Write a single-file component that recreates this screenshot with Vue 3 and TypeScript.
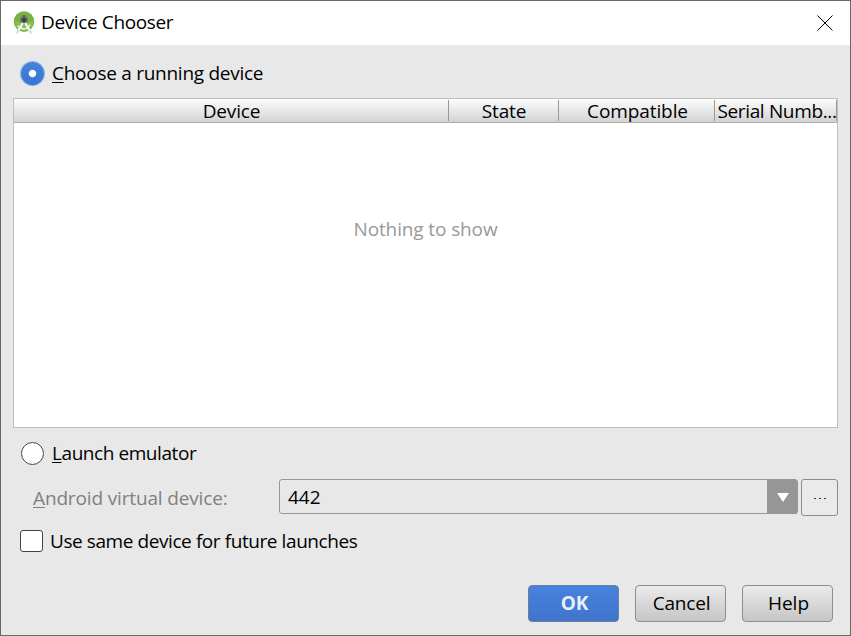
<script setup lang="ts">
import { ref } from 'vue'

interface Column {
  key: string
  label: string
}

const columns: Column[] = [
  { key: 'device', label: 'Device' },
  { key: 'state', label: 'State' },
  { key: 'compatible', label: 'Compatible' },
  { key: 'serial', label: 'Serial Numb...' },
]

const mode = ref<'running' | 'emulator'>('running')
const reuse = ref(false)
const avd = ref('442')
</script>

<template>
  <div class="dialog">
    <header class="titlebar">
      <svg class="logo" viewBox="0 0 22 24" width="22" height="24">
        <circle cx="11" cy="10.500" r="10.2" fill="#78b144" />
        <path d="M.8 10.500a10.200 10.200 0 0 0 20.400 0z" fill="#86be50" />
        <path d="M9.500 4h3v1.700l2 1v4.300l-1.500 2H9l-1.500-2V6.700l2-1z" fill="#5a675e" />
        <circle cx="11" cy="9" r="2" fill="#36434a" />
        <path d="M9.800 12 3.500 22.500M12.200 12l6.300 10.500" stroke="#d9dbd7" stroke-width="2.200" fill="none" />
        <path d="M9.800 12 5.500 19.200M12.200 12l4.300 7.200" stroke="#fafbf8" stroke-width="1.800" fill="none" />
        <path d="M5 14.800q2.500 3.200 6 3.200t6-4.500" stroke="#f3f5ee" stroke-width="1.500" fill="none" />
      </svg>
      <h1 class="title t-title">Device Chooser</h1>
      <button class="close" aria-label="Close">
        <svg viewBox="0 0 16 16" width="16" height="16">
          <path d="M.5.5l15 15M15.500.5l-15 15" stroke="#000" stroke-width="1" fill="none" />
        </svg>
      </button>
    </header>

    <main class="body">
      <div class="choice running" @click="mode = 'running'">
        <span class="radio" :class="{ on: mode === 'running' }"></span>
        <span class="t-running"><u>C</u>hoose a running device</span>
      </div>

      <section class="table">
        <div class="head">
          <div v-for="c in columns" :key="c.key" class="cell"><span :class="'t-' + c.key">{{ c.label }}</span></div>
        </div>
        <div class="empty"><span class="t-empty">Nothing to show</span></div>
      </section>

      <div class="choice emulator" @click="mode = 'emulator'">
        <span class="radio" :class="{ on: mode === 'emulator' }"></span>
        <span class="t-emulator"><u>L</u>aunch emulator</span>
      </div>

      <div class="avd">
        <div class="avd-label"><span class="t-avd"><u>A</u>ndroid virtual device:</span></div>
        <div class="combo">
          <span class="value">{{ avd }}</span>
          <span class="arrow">
            <svg viewBox="0 0 12 9" width="12" height="9"><path d="M0 0h12L6 9z" fill="#fff" /></svg>
          </span>
        </div>
        <button class="more" aria-label="More"><i></i><i></i><i></i></button>
      </div>

      <div class="choice reuse" @click="reuse = !reuse">
        <span class="check"></span>
        <span class="t-reuse">Use same device for future launches</span>
      </div>

      <footer class="actions">
        <button class="btn primary"><span class="t-ok">OK</span></button>
        <button class="btn"><span class="t-cancel">Cancel</span></button>
        <button class="btn"><span class="t-help">Help</span></button>
      </footer>
    </main>
  </div>
</template>

<style>
html,
body {
  margin: 0;
  background: #e8e8e8;
}
</style>

<style scoped>
.dialog {
  box-sizing: border-box;
  width: 851px;
  height: 636px;
  border: 1px solid #68686a;
  background: #e8e8e8;
  color: #000;
  font-family: 'Open Sans', 'Noto Sans', sans-serif;
  font-size: 19px;
  line-height: 24px;
  white-space: nowrap;
  overflow: hidden;
}
button {
  font: inherit;
  color: inherit;
  padding: 0;
}
.titlebar {
  display: flex;
  align-items: center;
  box-sizing: border-box;
  height: 44px;
  padding: 0 17px 1px 12px;
  background: #fff;
}
.title {
  margin: 0 auto 0 6px;
  padding-bottom: 2px;
  font-size: inherit;
  font-weight: 400;
}
.t-title {
  letter-spacing: -0.37px;
}
.t-running {
  letter-spacing: -0.27px;
}
.t-device,
.t-state {
  letter-spacing: -0.15px;
  padding-left: 1px;
}
.t-compatible {
  letter-spacing: -0.1px;
  padding-left: 2px;
}
.t-serial {
  letter-spacing: -0.35px;
  padding-left: 3px;
}
.t-empty {
  letter-spacing: -0.12px;
}
.t-emulator {
  letter-spacing: -0.43px;
  padding-bottom: 1px;
}
.t-avd {
  letter-spacing: -0.15px;
}
.t-reuse {
  letter-spacing: -0.42px;
}
.t-cancel {
  letter-spacing: -0.2px;
  padding-left: 1px;
}
.t-help,
.t-ok {
  padding-left: 1px;
}
.close {
  display: flex;
  border: 0;
  background: none;
}
.body {
  padding: 0 12px;
}
.choice {
  display: flex;
  align-items: center;
}
u {
  text-decoration-thickness: 1px;
  text-underline-offset: 2px;
}
.running {
  height: 53px;
  padding: 3px 0 0 7px;
  box-sizing: border-box;
}
.radio {
  box-sizing: border-box;
  width: 23px;
  height: 23px;
  border: 1px solid #444;
  border-radius: 50%;
  background: #fff;
  margin: 0 8px 0 1px;
}
.radio.on {
  border: 0;
  background: radial-gradient(circle, #fff 3.200px, transparent 4.200px), linear-gradient(#4382de, #3a75d2);
  box-shadow: 0 0 0 1px #86b3e4;
}
.table {
  box-sizing: border-box;
  width: 825px;
  height: 330px;
  border: 1px solid #bebebe;
  background: #fff;
}
.head {
  display: grid;
  grid-template-columns: 435px 110px 156px 122px;
  box-sizing: border-box;
  height: 24px;
  border-bottom: 1px solid #acacac;
  background: linear-gradient(#fdfdfd, #d3d3d3);
}
.cell {
  display: flex;
  align-items: center;
  justify-content: center;
  height: 21px;
  margin-top: 1px;
  border-right: 1px solid #999;
}
.empty {
  display: flex;
  justify-content: center;
  padding-top: 94px;
  color: #999;
}
.emulator {
  height: 51px;
  padding-left: 7px;
}
.avd {
  display: flex;
  align-items: flex-start;
  height: 37px;
}
.avd-label {
  box-sizing: border-box;
  width: 266px;
  padding: 7px 0 0 20px;
  color: #808080;
}
.combo {
  display: flex;
  align-items: center;
  justify-content: space-between;
  box-sizing: border-box;
  width: 519px;
  height: 35px;
  border: 1px solid #969696;
  border-radius: 3px;
}
.value {
  padding-left: 8px;
}
.arrow {
  display: flex;
  align-items: center;
  justify-content: center;
  box-sizing: border-box;
  width: 30px;
  height: 34px;
  padding: 2px 0 0 1px;
  background: #969696;
}
.more {
  display: flex;
  align-items: center;
  justify-content: center;
  gap: 3px;
  box-sizing: border-box;
  width: 37px;
  height: 37px;
  margin-left: 3px;
  padding-top: 2px;
  border: 1px solid #8c8c8c;
  border-radius: 3px;
  background: #eaeaea;
}
.more i {
  width: 2px;
  height: 1px;
  background: #333;
}
.reuse {
  height: 50px;
  padding-left: 7px;
}
.check {
  box-sizing: border-box;
  width: 23px;
  height: 22px;
  margin-right: 7px;
  border: 1px solid #444;
  border-radius: 3px;
  background: #fff;
}
.actions {
  display: flex;
  justify-content: flex-end;
  gap: 16px;
  padding: 19px 5px 0 0;
}
.btn {
  width: 91px;
  height: 37px;
  box-sizing: border-box;
  border: 1px solid #8e8e8e;
  border-radius: 4px;
  background: linear-gradient(#ebebeb, #c5c5c5);
  padding: 0 0 1px 1px;
}
.primary {
  border-color: #6f7e97;
  background: linear-gradient(#4782de, #3f74cc);
  color: #e9eefa;
  font-weight: 700;
}
</style>
